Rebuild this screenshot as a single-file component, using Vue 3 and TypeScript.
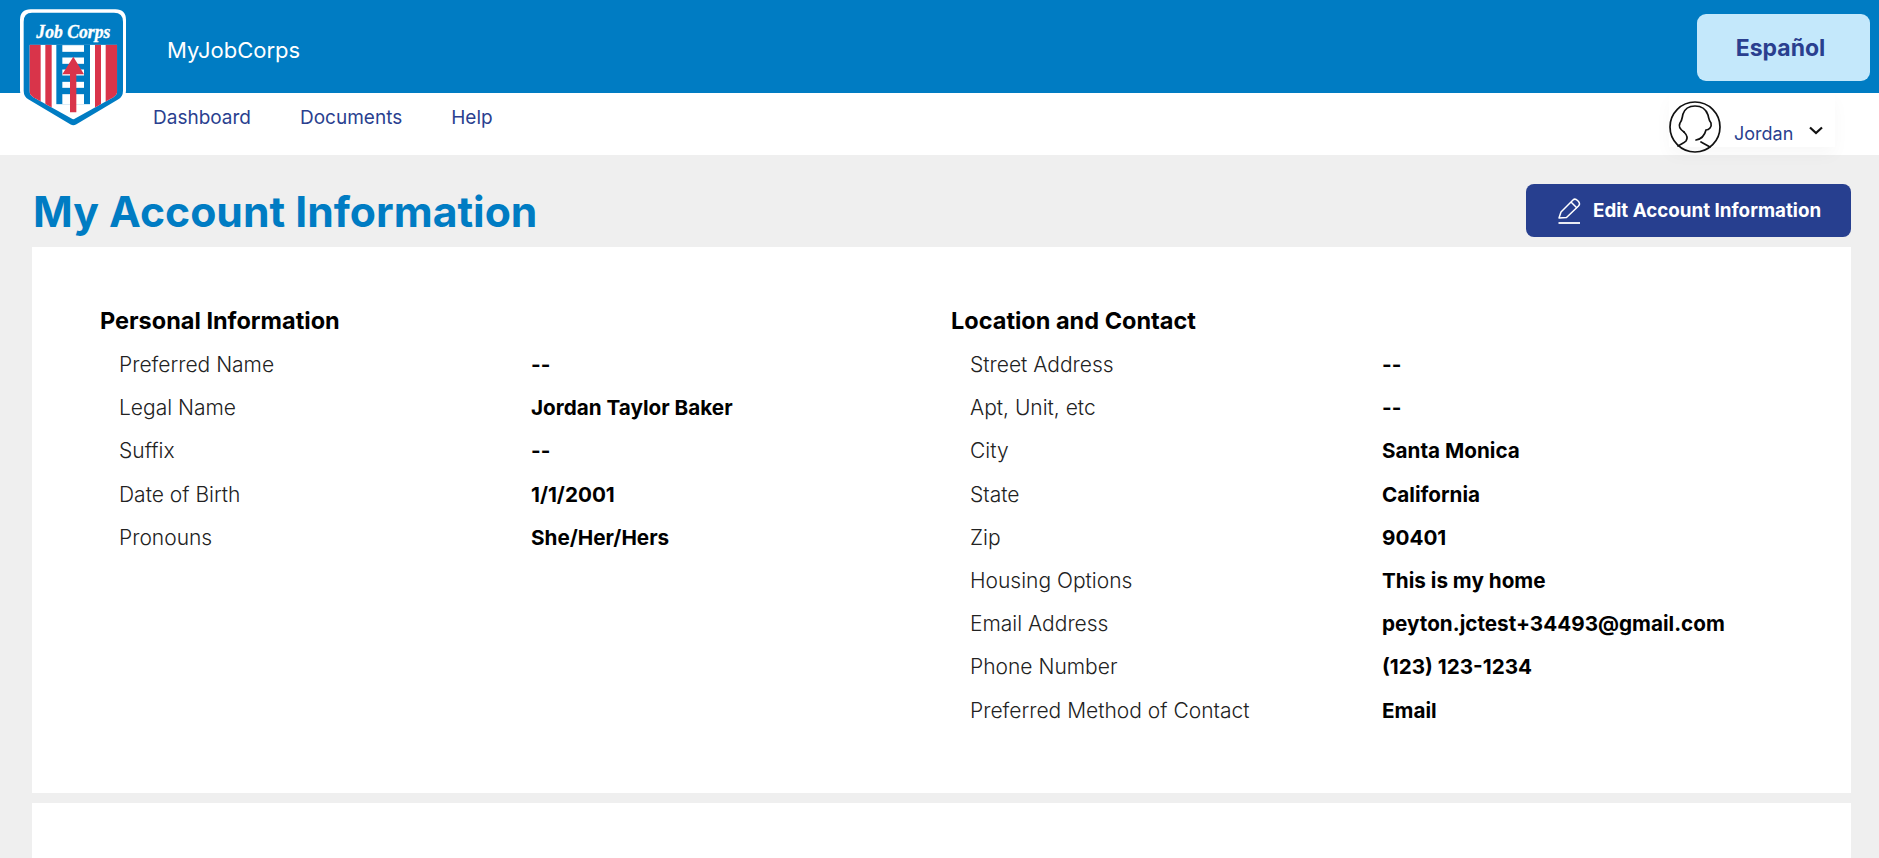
<script setup lang="ts">
const navLinks = ['Dashboard', 'Documents', 'Help']

const personal = [
  { label: 'Preferred Name', value: '--' },
  { label: 'Legal Name', value: 'Jordan Taylor Baker' },
  { label: 'Suffix', value: '--' },
  { label: 'Date of Birth', value: '1/1/2001' },
  { label: 'Pronouns', value: 'She/Her/Hers' },
]

const contact = [
  { label: 'Street Address', value: '--' },
  { label: 'Apt, Unit, etc', value: '--' },
  { label: 'City', value: 'Santa Monica' },
  { label: 'State', value: 'California' },
  { label: 'Zip', value: '90401' },
  { label: 'Housing Options', value: 'This is my home' },
  { label: 'Email Address', value: 'peyton.jctest+34493@gmail.com' },
  { label: 'Phone Number', value: '(123) 123-1234' },
  { label: 'Preferred Method of Contact', value: 'Email' },
]
</script>

<template>
  <div class="page">
    <header class="topbar">
      <span class="brand">MyJobCorps</span>
      <button class="lang">Español</button>
    </header>

    <svg class="logo" viewBox="60 27 318 350" width="106" height="117">
      <defs>
        <clipPath id="panel">
          <path d="M88 133H352V272Q352 284 340 291L220 358L100 291Q88 284 88 272Z" />
        </clipPath>
      </defs>
      <path d="M92 27H346Q378 27 378 59V272Q378 290 362 299L228 377H212L76 299Q60 290 60 272V59Q60 27 92 27Z" fill="#fff" />
      <path d="M96 38H342Q369 38 369 65V272Q369 290 354 298L228 373Q220 377 212 373L86 298Q71 290 71 272V65Q71 38 96 38Z" fill="#007cc3" />
      <text class="logo-text" x="220" y="115" text-anchor="middle" textLength="222" lengthAdjust="spacingAndGlyphs">Job Corps</text>
      <g clip-path="url(#panel)">
        <rect x="88" y="133" width="264" height="240" fill="#fff" />
        <rect x="88" y="133" width="34" height="240" fill="#d9344a" />
        <rect x="136" y="133" width="19" height="240" fill="#d9344a" />
        <rect x="285" y="133" width="18" height="240" fill="#d9344a" />
        <rect x="317" y="133" width="35" height="240" fill="#d9344a" />
        <rect x="169" y="133" width="101" height="179" fill="#007cc3" />
        <rect x="187" y="135" width="65" height="20" fill="#fff" />
        <rect x="187" y="172" width="65" height="19" fill="#fff" />
        <rect x="187" y="208" width="65" height="18" fill="#fff" />
        <rect x="187" y="245" width="65" height="18" fill="#fff" />
        <rect x="187" y="282" width="65" height="30" fill="#fff" />
        <path d="M210 336V222H187L220 170L252 222H229V336Z" fill="#d9344a" />
      </g>
    </svg>

    <nav class="subnav">
      <div class="links">
        <a v-for="link in navLinks" :key="link" class="nav-link">{{ link }}</a>
      </div>
      <div class="user">
        <svg class="avatar" viewBox="0 0 52 52" width="52" height="52" fill="none" stroke="#111" stroke-width="1.7" stroke-linecap="round">
          <circle cx="26" cy="26" r="25" />
          <path d="M15 31C12 29 9 26 11 22C13 20 13 17 14 13C16 7 21 5 26 5C32 5 37 8 39 14C40 18 40 20 42 22C43 26 40 29 37 29C36 33 33 38 27 39" />
          <path d="M15 31C18 34 19 37 17 40C15 42 12 43 9 45" />
          <path d="M32 41L41 46" />
        </svg>
        <span class="user-name">Jordan</span>
        <svg class="chevron" viewBox="0 0 14 9" width="14" height="9" fill="none" stroke="#111" stroke-width="2.2">
          <path d="M1 1.5L7 7L13 1.5" />
        </svg>
      </div>
    </nav>

    <main class="content">
      <div class="title-row">
        <h1 class="title">My Account Information</h1>
        <button class="edit-btn">
          <svg viewBox="0 0 24 26" width="24" height="26" fill="none" stroke="#fff" stroke-width="1.5" stroke-linejoin="round">
            <path d="M1 20L3 14L15 2Q17 0 19.500 2.500L20.500 3.500Q22.500 6 20.500 8L8.500 19.500Z" />
            <path d="M13 4L19 10" />
            <path d="M0.500 25H22" stroke-width="1.800" />
          </svg>
          Edit Account Information
        </button>
      </div>

      <section class="card info-card">
        <div class="column">
          <h2 class="section-title">Personal Information</h2>
          <dl class="rows personal">
            <div v-for="row in personal" :key="row.label" class="row">
              <dt>{{ row.label }}</dt>
              <dd>{{ row.value }}</dd>
            </div>
          </dl>
        </div>
        <div class="column">
          <h2 class="section-title">Location and Contact</h2>
          <dl class="rows location">
            <div v-for="row in contact" :key="row.label" class="row">
              <dt>{{ row.label }}</dt>
              <dd>{{ row.value }}</dd>
            </div>
          </dl>
        </div>
      </section>

      <section class="card next-card"></section>
    </main>
  </div>
</template>

<style>
html,
body {
  margin: 0;
  overflow: hidden;
}
</style>

<style scoped>
.page {
  position: relative;
  height: 858px;
  overflow: hidden;
  background: #efefef;
  font-family: Inter, Lato, sans-serif;
}
.topbar {
  height: 93px;
  box-sizing: border-box;
  padding: 14px 9px 12px 167px;
  display: flex;
  align-items: center;
  justify-content: space-between;
  background: #007cc3;
}
.brand {
  color: #fff;
  font-size: 22px;
  margin-top: 4px;
}
.lang {
  width: 173px;
  height: 67px;
  border: 0;
  border-radius: 9px;
  padding: 0 10px 0 4px;
  background: #c4e8fb;
  color: #2a3f8f;
  font: 700 23px Inter, sans-serif;
}
.logo {
  position: absolute;
  top: 9px;
  left: 20px;
}
.logo-text {
  fill: #fff;
  font: italic 700 56px "Liberation Serif", serif;
  stroke: #fff;
  stroke-width: 1px;
}
.subnav {
  height: 62px;
  padding: 0 44px 0 153px;
  display: flex;
  justify-content: space-between;
  background: #fff;
}
.links {
  display: flex;
  gap: 49px;
  padding-top: 15px;
}
.nav-link {
  color: #2a3f8f;
  font-size: 19px;
  line-height: 20px;
}
.user {
  display: flex;
  align-items: flex-start;
  width: 166px;
  height: 54px;
  padding-top: 8px;
  box-sizing: border-box;
  margin-left: auto;
  box-shadow: 0 8px 16px rgba(0, 0, 0, 0.03);
}
.avatar {
  flex: none;
}
.user-name {
  margin: 21px 0 0 13px;
  color: #2a3f8f;
  font-size: 18px;
  line-height: 24px;
}
.chevron {
  margin: 25px 0 0 16px;
}
.content {
  padding: 0 28px 0 32px;
}
.title-row {
  height: 92px;
  display: flex;
  justify-content: space-between;
  align-items: flex-start;
}
.title {
  margin: 31px 0 0 1px;
  color: #007cc3;
  font: 700 42.700px/52px Inter, sans-serif;
}
.edit-btn {
  margin-top: 29px;
  width: 325px;
  height: 53px;
  border: 0;
  border-radius: 8px;
  background: #273f8f;
  color: #fff;
  font: 700 18.800px Inter, sans-serif;
  display: flex;
  align-items: center;
  gap: 11px;
  padding: 0 0 0 32px;
}
.card {
  background: #fff;
}
.info-card {
  height: 546px;
  box-sizing: border-box;
  padding: 59px 0 0 68px;
  display: grid;
  grid-template-columns: 851px 1fr;
}
.next-card {
  height: 60px;
  margin-top: 10px;
}
.section-title {
  margin: 0;
  color: #000;
  font: 700 23.500px/30px Inter, sans-serif;
}
.rows {
  margin: 7px 0 0;
  padding-left: 19px;
}
.row {
  display: grid;
  height: 43.200px;
  align-items: center;
}
.personal .row {
  grid-template-columns: 412px 1fr;
}
.location .row {
  grid-template-columns: 412px 1fr;
}
dt {
  color: #222;
  font-size: 21px;
  font-weight: 300;
}
dd {
  margin: 0;
  color: #000;
  font-size: 20.700px;
  font-weight: 700;
}
</style>
